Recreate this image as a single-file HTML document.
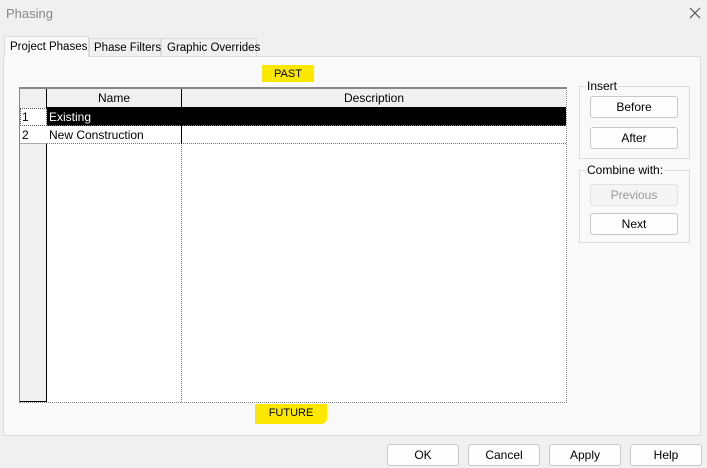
<!DOCTYPE html><html><head><style>
body{margin:0;width:707px;height:468px;background:#f0f0f0;font-family:"Liberation Sans",sans-serif;font-size:12px;color:#000;position:relative;overflow:hidden}
div{position:absolute;box-sizing:border-box;white-space:nowrap}
.btn{background:#fdfdfd;border:1px solid #c8c8c8;border-radius:3px;text-align:center;line-height:20px}
.grp{border:1px solid #dcdcdc}
.lg{background:#f9f9f9;padding:0 1px;line-height:12px}
</style></head><body>
<div style="left:6px;top:6px;color:#888;font-size:13px">Phasing</div>
<svg style="position:absolute;left:689px;top:7px" width="12" height="12"><path d="M1 1L11 11M11 1L1 11" stroke="#555" stroke-width="1.2"/></svg>
<div style="left:3px;top:56px;width:698px;height:380px;background:#f9f9f9;border:1px solid #dcdcdc"></div>
<div style="left:4px;top:36px;width:85px;height:21px;background:#f9f9f9;border:1px solid #dcdcdc;border-bottom:none;padding:4px 0 0 5px;font-size:11.5px">Project Phases</div>
<div style="left:89px;top:38px;width:72px;height:18px;background:#f0f0f0;border:1px solid #dcdcdc;border-bottom:none;padding:3px 0 0 4px;font-size:11.5px">Phase Filters</div>
<div style="left:161px;top:38px;width:96px;height:18px;background:#f0f0f0;border:1px solid #dcdcdc;border-bottom:none;padding:3px 0 0 5px;font-size:11.5px">Graphic Overrides</div>
<div style="left:262px;top:65px;width:52px;height:17px;background:#fce700;text-align:center;line-height:18px;font-size:11px">PAST</div>
<div style="left:19px;top:87px;width:548px;height:316px;background:#fff;border-top:2px solid #888;border-left:1px solid #888;border-right:1px dotted #888;border-bottom:1px dotted #888"></div>
<div style="left:20px;top:89px;width:27px;height:313px;background:#f0f0f0;border-right:1px solid #000;border-bottom:1px solid #000"></div>
<div style="left:47px;top:89px;width:519px;height:19px;background:#f0f0f0;border-bottom:1px solid #000"></div>
<div style="left:47px;top:89px;width:135px;height:19px;border-right:1px solid #000;text-align:center;line-height:18px">Name</div>
<div style="left:182px;top:89px;width:384px;height:19px;text-align:center;line-height:18px">Description</div>
<div style="left:181px;top:108px;width:1px;height:294px;border-left:1px dotted #777"></div>
<div style="left:47px;top:108px;width:519px;height:18px;background:#000;color:#fff;padding-left:2px;line-height:18px;border-bottom:1px dotted #777">Existing</div>
<div style="left:20px;top:108px;width:27px;height:18px;background:#fff;border:1px dotted #555;padding-left:1px;line-height:16px">1</div>
<div style="left:20px;top:126px;width:27px;height:18px;background:#fff;border-bottom:1px solid #aaa;padding-left:2px;line-height:18px">2</div>
<div style="left:47px;top:126px;width:519px;height:18px;padding-left:2px;line-height:18px;border-bottom:1px dotted #777">New Construction</div>
<div style="left:181px;top:108px;width:1px;height:36px;background:#000"></div>
<div style="left:255px;top:404px;width:72px;height:20px;background:#fce700;text-align:center;line-height:18px;font-size:11px;border-radius:0 0 6px 0">FUTURE</div>
<div class="grp" style="left:579px;top:86px;width:111px;height:73px"></div>
<div class="lg" style="left:586px;top:80px">Insert</div>
<div class="btn" style="left:590px;top:96px;width:88px;height:22px">Before</div>
<div class="btn" style="left:590px;top:127px;width:88px;height:22px">After</div>
<div class="grp" style="left:579px;top:170px;width:111px;height:73px"></div>
<div class="lg" style="left:586px;top:164px">Combine with:</div>
<div class="btn" style="left:590px;top:184px;width:88px;height:22px;color:#999;background:#f5f5f5;border-color:#e2e2e2">Previous</div>
<div class="btn" style="left:590px;top:213px;width:88px;height:22px">Next</div>
<div class="btn" style="left:387px;top:444px;width:72px;height:22px">OK</div>
<div class="btn" style="left:468px;top:444px;width:72px;height:22px">Cancel</div>
<div class="btn" style="left:549px;top:444px;width:72px;height:22px">Apply</div>
<div class="btn" style="left:630px;top:444px;width:72px;height:22px">Help</div>
</body></html>
